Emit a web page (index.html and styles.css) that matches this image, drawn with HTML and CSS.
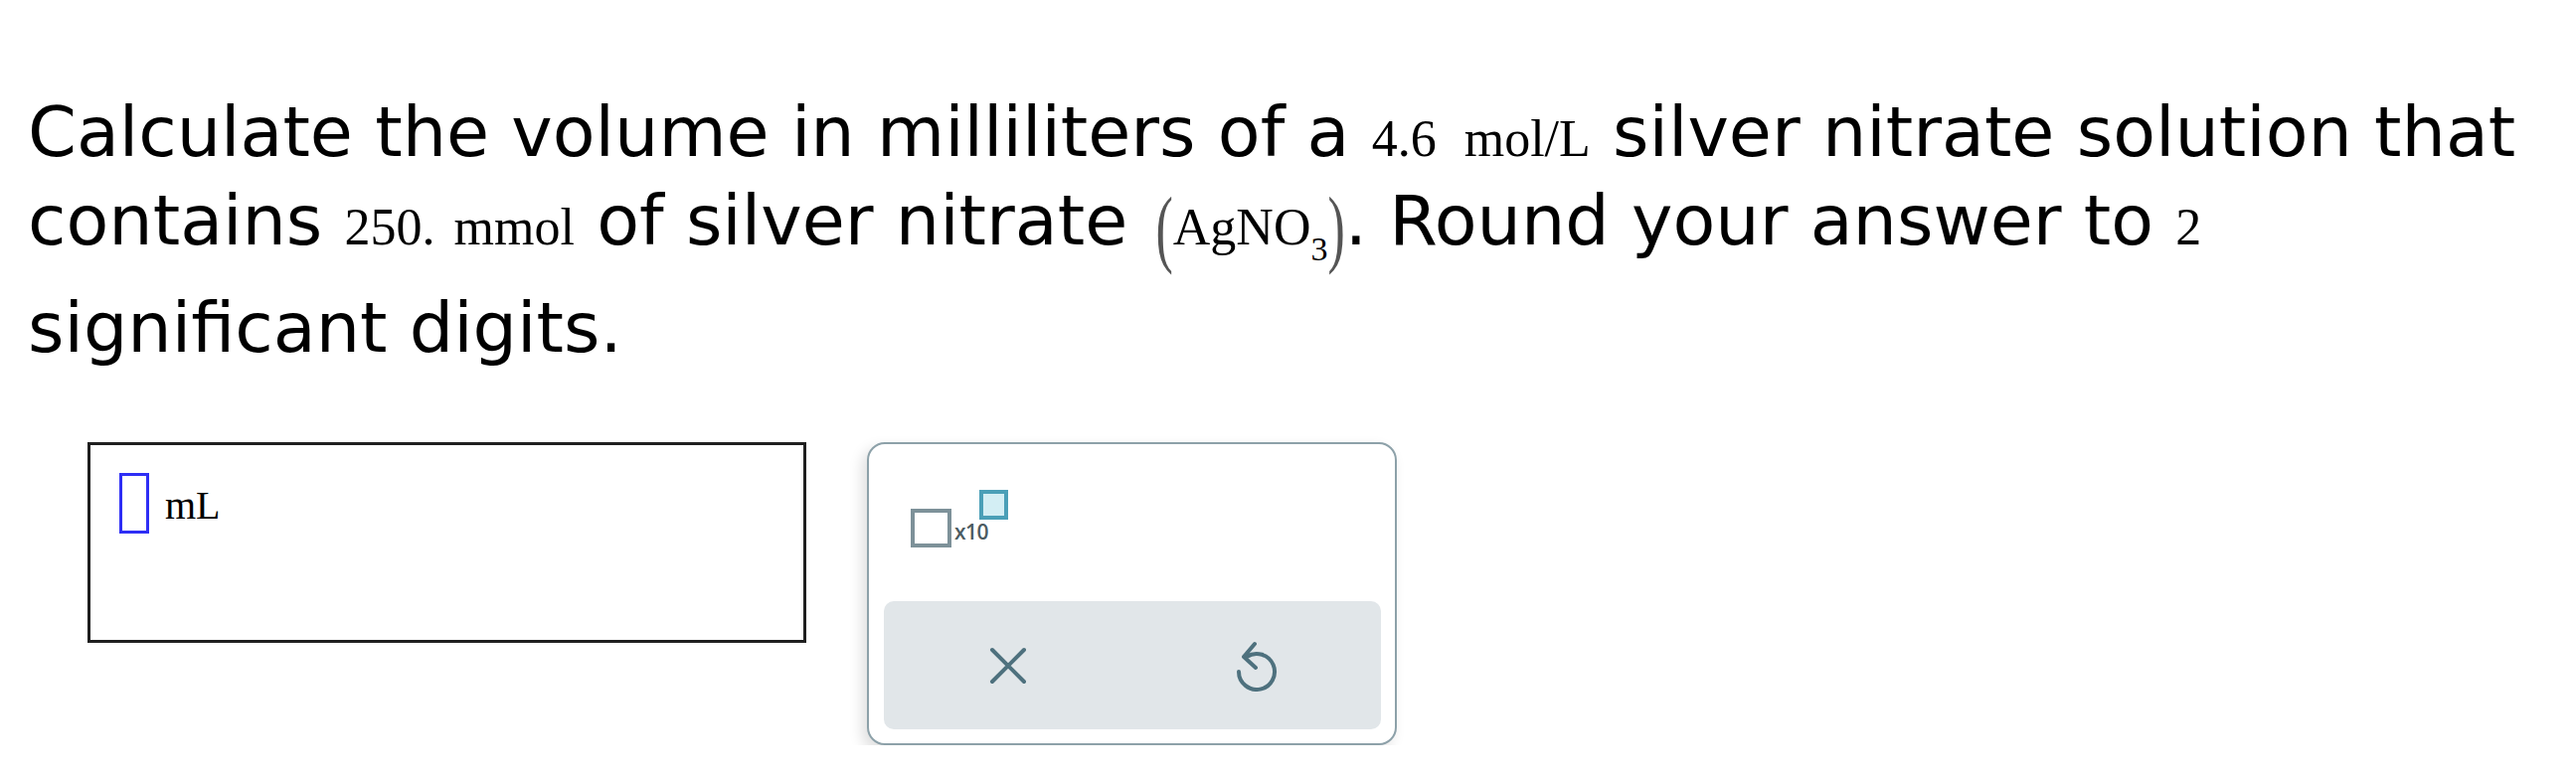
FILE: index.html
```html
<!DOCTYPE html>
<html lang="en">
<head>
<meta charset="utf-8">
<title>Question</title>
<link rel="stylesheet" href="styles.css">
</head>
<body>
<div class="page">
  <p class="question">Calculate the volume in milliliters of a <span class="m">4.6<span class="u-wide">mol/L</span></span> silver nitrate solution that<br>contains <span class="m">250.<span class="u-narrow">mmol</span></span> of silver nitrate <span class="formula"><span class="paren">(</span>AgNO<sub class="sub">3</sub><span class="paren">)</span></span>. Round your answer to <span class="m">2</span><br>significant digits.</p>

  <div class="answer-row">
    <div class="answer-box">
      <span class="cursor"></span>
      <span class="unit">mL</span>
    </div>

    <div class="keypad">
      <div class="keys">
        <button class="sci-key" type="button" aria-label="scientific notation">
          <span class="big-box"></span>
          <span class="x10">x10</span>
          <span class="small-box"></span>
        </button>
      </div>
      <div class="actions">
        <button class="action" type="button" aria-label="clear">
          <svg width="40" height="40" viewBox="0 0 40 40"><path d="M4 4 L36 36 M36 4 L4 36" fill="none" stroke="#4e717e" stroke-width="4" stroke-linecap="round"/></svg>
        </button>
        <button class="action" type="button" aria-label="undo">
          <svg width="44" height="52" viewBox="0 0 44 52"><path d="M4 32 A18 18 0 1 0 12 17 L9 17 M20 4 L9 17 L21 28" fill="none" stroke="#4e717e" stroke-width="4" stroke-linecap="round" stroke-linejoin="round"/></svg>
        </button>
      </div>
    </div>
  </div>
</div>
</body>
</html>
```

FILE: styles.css
```css
body {
  margin: 0;
  background: #ffffff;
}

.page {
  padding: 89px 0 0 28px;
}

.question {
  margin: 0;
  font-family: "DejaVu Sans", Verdana, sans-serif;
  font-size: 70px;
  line-height: 89px;
  color: #000000;
  white-space: nowrap;
}

.m {
  font-family: "Liberation Serif", "Times New Roman", serif;
  font-size: 52px;
  line-height: 1;
}

.u-wide {
  margin-left: 28px;
}

.u-narrow {
  margin-left: 19px;
}

.formula {
  display: inline-block;
  font-family: "Liberation Serif", "Times New Roman", serif;
  font-size: 52px;
  line-height: 52px;
  padding-bottom: 31px;
  margin-left: 6px;
}

.paren {
  display: inline-block;
  color: #555555;
  transform: translateY(4px) scaleY(1.66);
  transform-origin: 50% 58.6%;
}

.sub {
  font-size: 34px;
  line-height: 0;
  vertical-align: -16px;
}

.answer-row {
  display: flex;
  align-items: flex-start;
  gap: 61px;
  margin: 70px 0 0 60px;
}

.answer-box {
  box-sizing: border-box;
  width: 723px;
  height: 202px;
  border: 3px solid #1f1f1f;
  padding: 28px 0 0 29px;
  display: flex;
  align-items: flex-start;
}

.cursor {
  box-sizing: border-box;
  width: 30px;
  height: 61px;
  border: 3px solid #2e2ef5;
}

.unit {
  font-family: "Liberation Serif", "Times New Roman", serif;
  font-size: 40px;
  line-height: 40px;
  margin-left: 16px;
  margin-top: 13px;
  color: #000000;
}

.keypad {
  box-sizing: border-box;
  width: 533px;
  height: 305px;
  border: 2px solid #8da1a9;
  border-radius: 18px;
  background: #ffffff;
  box-shadow: -5px 6px 14px rgba(0, 0, 0, 0.13);
  display: flex;
  flex-direction: column;
}

.keys {
  box-sizing: border-box;
  height: 158px;
  padding: 46px 0 0 42px;
}

.sci-key {
  display: flex;
  align-items: flex-start;
  background: none;
  border: 0;
  padding: 0;
  cursor: pointer;
}

.big-box {
  box-sizing: border-box;
  width: 41px;
  height: 39px;
  border: 4px solid #7d9199;
  margin-top: 19px;
}

.x10 {
  font-family: "Open Sans", Lato, sans-serif;
  font-weight: 600;
  font-size: 21px;
  line-height: 21px;
  letter-spacing: -0.5px;
  color: #4b5b61;
  margin-top: 32px;
  margin-left: 3px;
}

.small-box {
  box-sizing: border-box;
  width: 29px;
  height: 30px;
  border: 4px solid #4a9fb7;
  background: #d3eef4;
  margin-left: -9px;
}

.actions {
  flex: 1;
  margin: 0 14px 14px 15px;
  background: #e1e6e9;
  border-radius: 10px;
  display: grid;
  grid-template-columns: 1fr 1fr;
  align-items: center;
  justify-items: center;
}

.action {
  background: none;
  border: 0;
  padding: 0;
  display: flex;
  cursor: pointer;
}
```
